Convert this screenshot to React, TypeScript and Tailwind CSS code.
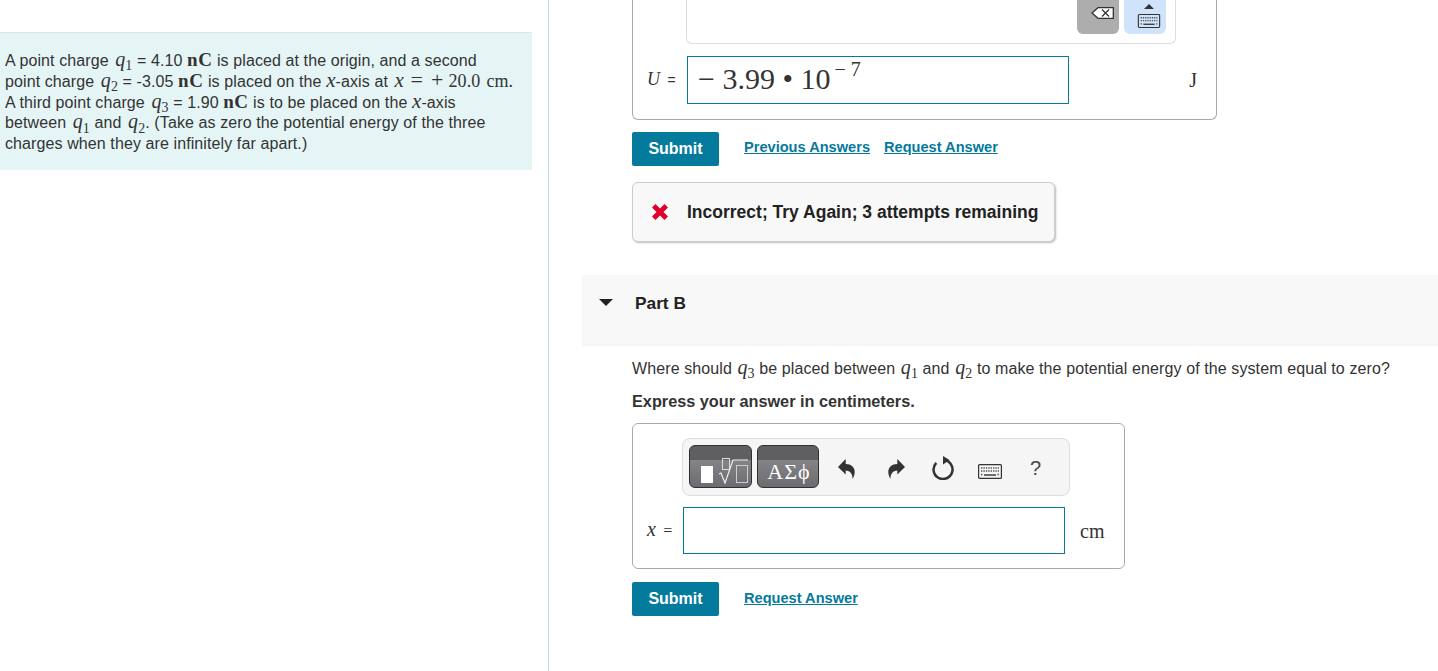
const Serif = ({ children, className = "" }: { children: React.ReactNode; className?: string }) => (
  <span className={`font-['Liberation_Serif',serif] leading-[0] ${className}`}>{children}</span>
);

const Q = ({ n, wide = false }: { n: number; wide?: boolean }) => (
  <span className={`font-['Liberation_Serif',serif] text-[20px] leading-[0] ${wide ? "ml-[2px]" : "ml-[1px]"}`}>
    <i>q</i>
    <sub className="text-[14px] leading-[0] bottom-[-0.3em]">{n}</sub>
  </span>
);

const NC = () => <Serif className="text-[19px] font-bold tracking-[0.5px]">nC</Serif>;
const X = () => <Serif className="italic text-[21px]">x</Serif>;

const SubmitButton = () => (
  <button className="w-[87px] h-[34px] rounded-[2px] bg-[#047a9c] text-white font-bold text-[16px]">
    Submit
  </button>
);

const LinkText = ({ children }: { children: React.ReactNode }) => (
  <a className="text-[14.6px] font-bold text-[#047a9c] underline">{children}</a>
);

const KeyboardIcon = ({ className = "" }: { className?: string }) => (
  <svg viewBox="0 0 24 15" className={className} fill="none">
    <rect x="0.6" y="0.6" width="22.8" height="13.8" rx="1" stroke="#333" strokeWidth="1.2" />
    <path d="M3 4h18M3 7h18" stroke="#555" strokeWidth="1.4" strokeDasharray="1.4 1" />
    <path d="M6 11h12" stroke="#333" strokeWidth="1.4" />
    <path d="M3 10.5h1.5M19.5 10.5H21" stroke="#555" strokeWidth="1.4" />
  </svg>
);

const TemplateIcon = () => (
  <svg viewBox="0 0 61 41" className="w-[61px] h-[41px]" fill="none">
    <rect x="11" y="20" width="12" height="17" fill="#fff" />
    <rect x="32.500" y="12.500" width="7" height="11" stroke="#ddd" strokeWidth="1" />
    <path d="M29 28l2-1 4 10 8-23h15" stroke="#eee" strokeWidth="1.2" />
    <rect x="46.500" y="19.500" width="11" height="17" stroke="#ccc" strokeWidth="1" />
  </svg>
);

const UndoIcon = ({ flip = false }: { flip?: boolean }) => (
  <svg viewBox="0 0 17 20" className={`w-[17px] h-[20px] ${flip ? "-scale-x-100" : ""}`}>
    <path d="M0 8L7.700 0V5C13 5 17 8.500 16.700 13.300C16.600 16 15.500 18.500 14.500 20C14.800 15 12 11.500 7.700 11.500V15.500Z" fill="#333" />
  </svg>
);

const ResetIcon = () => (
  <svg viewBox="0 0 22 24" className="w-[22px] h-[24px]" fill="none">
    <path d="M11 4A9.500 9.500 0 1 1 4.300 6.800" stroke="#333" strokeWidth="2.500" />
    <path d="M11 0l6.500 4-6.500 4.500z" fill="#333" />
  </svg>
);

const BackspaceIcon = () => (
  <svg viewBox="0 0 23 12" className="w-[23px] h-[12px]" fill="none">
    <path d="M7 .7h15.300v10.600H7L1 6z" fill="#fff" stroke="#333" strokeWidth="1.300" />
    <path d="M11 2.500l7 7M18 2.500l-7 7" stroke="#333" strokeWidth="1.300" />
  </svg>
);

const ToolButton = ({ children }: { children: React.ReactNode }) => (
  <div className="h-[43px] rounded-[6px] border border-[#2f2f2f] bg-[linear-gradient(#5f5f61_0,#5f5f61_34%,#838388_35%,#6c6c70_100%)] flex items-end justify-center overflow-hidden">
    {children}
  </div>
);

export default function App() {
  return (
    <div className="w-[1438px] h-[671px] overflow-hidden flex bg-white text-[16px] text-[#333] font-['Liberation_Sans',Arial,sans-serif]">
      <aside className="w-[549px] shrink-0 border-r border-[#bcd8ea] pt-[32px]">
        <div className="w-[532px] h-[138px] bg-[#e5f5f6] border-t border-[#dfe3e3] pt-[18px] pl-[5px] leading-[20.8px] tracking-[0.1px] whitespace-nowrap">
          A point charge <Q n={1} wide /> = 4.10 <NC /> is placed at the origin, and a second
          <br />
          point charge <Q n={2} wide /> = -3.05 <NC /> is placed on the <X />-axis at <span className="ml-[2px]" /><X />{" "}
          <Serif className="text-[22px] ml-[2px]">=</Serif>
          <Serif className="text-[22px] ml-[8px]">+</Serif>
          <Serif className="text-[18px] ml-[5px]">20.0</Serif>
          <Serif className="text-[18px] ml-[6px]">cm.</Serif>
          <br />
          A third point charge <Q n={3} wide /> = 1.90 <NC /> is to be placed on the <X />-axis
          <br />
          between <Q n={1} wide /> and <Q n={2} wide />. (Take as zero the potential energy of the three
          <br />
          charges when they are infinitely far apart.)
        </div>
      </aside>

      <main className="flex-1 pl-[33px]">
        <div className="ml-[50px] w-[585px] h-[120px] border border-t-0 border-[#aaa] rounded-b-[6px]">
          <div className="ml-[53px] w-[490px] h-[44px] border border-t-0 border-[#ddd] rounded-b-[6px] flex justify-end gap-[5px] pr-[9px]">
            <div className="w-[42px] h-[34px] bg-[#adadad] rounded-b-[6px] flex justify-center pt-[7px] pl-[8px]">
              <BackspaceIcon />
            </div>
            <div className="w-[42px] h-[34px] bg-[#cfe4fb] rounded-b-[6px] flex flex-col items-center pt-[4px] pl-[8px] gap-[5px]">
              <div className="w-0 h-0 border-x-[5px] border-x-transparent border-b-[5px] border-b-[#333]" />
              <KeyboardIcon className="w-[24px] h-[14px]" />
            </div>
          </div>
          <div className="flex items-center mt-[12px]">
            <div className="w-[54px] pl-[14px] whitespace-nowrap">
              <Serif className="italic text-[18px]">U</Serif> <span className="text-[14px] ml-[3px]">=</span>
            </div>
            <div className="w-[382px] h-[48px] border border-[#047a9c] pl-[10px] pb-[3px] flex items-center font-['Liberation_Serif',serif] text-[30px] whitespace-pre">
              − 3.99 • 10<sup className="text-[20px] top-[-0.5em] ml-[4px]">− 7</sup>
            </div>
            <div className="flex-1 text-right pr-[19px] font-['Liberation_Serif',serif] text-[20px]">J</div>
          </div>
        </div>

        <div className="ml-[50px] mt-[12px] flex items-center">
          <SubmitButton />
          <div className="ml-[25px] flex gap-[14px] pb-[2px]">
            <LinkText>Previous Answers</LinkText>
            <LinkText>Request Answer</LinkText>
          </div>
        </div>

        <div className="ml-[50px] mt-[16px] w-[423px] h-[60px] bg-[#f8f8f8] border border-[#ccc] rounded-[6px] shadow-[1px_1px_2px_#bbb] flex items-center pl-[18px] gap-[18px]">
          <svg viewBox="0 0 18 18" className="w-[18px] h-[18px]">
            <path d="M1 4.500L4.500 1 9 5.500 13.500 1 17 4.500 12.500 9 17 13.500 13.500 17 9 12.500 4.500 17 1 13.500 5.500 9z" fill="#e2002a" />
          </svg>
          <span className="font-bold text-[#222] text-[17.500px] whitespace-nowrap pt-[1px]">Incorrect; Try Again; 3 attempts remaining</span>
        </div>

        <div className="mt-[33px] h-[71px] bg-[#f8f8f8] flex pt-[16px] pl-[17px]">
          <div className="mt-[8px] w-0 h-0 border-x-[7px] border-x-transparent border-t-[7px] border-t-[#222]" />
          <span className="ml-[22px] font-bold text-[#222] text-[17.300px]">Part B</span>
        </div>

        <div className="ml-[50px]">
          <p className="mt-[12px] leading-[21px] tracking-[0.1px] whitespace-nowrap">
            Where should <Q n={3} /> be placed between <Q n={1} /> and <Q n={2} /> to make the potential energy of the system equal to zero?
          </p>
          <p className="mt-[12px] font-bold text-[16.250px] leading-[21px]">Express your answer in centimeters.</p>

          <div className="mt-[11px] w-[493px] h-[146px] border border-[#aaa] rounded-[6px] pt-[14px]">
            <div className="ml-[49px] w-[388px] h-[58px] bg-[#f5f5f5] border border-[#ddd] rounded-[8px] flex items-center pl-[6px] pb-[1px]">
              <div className="w-[63px]">
                <ToolButton>
                  <TemplateIcon />
                </ToolButton>
              </div>
              <div className="w-[62px] ml-[5px]">
                <ToolButton>
                  <span className="font-['Liberation_Serif',serif] text-white text-[22px] leading-[30px] tracking-[0.05em] pl-[2px]">ΑΣϕ</span>
                </ToolButton>
              </div>
              <div className="ml-[19px] mt-[4px]">
                <UndoIcon />
              </div>
              <div className="ml-[33px] mt-[4px]">
                <UndoIcon flip />
              </div>
              <div className="ml-[27px] mt-[3px]">
                <ResetIcon />
              </div>
              <div className="ml-[24px] mt-[10px]">
                <KeyboardIcon className="w-[24px] h-[15px]" />
              </div>
              <span className="ml-[28px] mt-[2px] text-[20px] text-[#444]">?</span>
            </div>
            <div className="flex items-center mt-[11px]">
              <div className="w-[50px] pl-[14px] whitespace-nowrap">
                <Serif className="italic text-[20px]">x</Serif> <Serif className="text-[16px] ml-[3px]">=</Serif>
              </div>
              <div className="w-[382px] h-[47px] border border-[#047a9c]" />
              <Serif className="ml-[15px] text-[20px]">cm</Serif>
            </div>
          </div>

          <div className="mt-[13px] flex items-center">
            <SubmitButton />
            <div className="ml-[25px] pb-[2px]">
              <LinkText>Request Answer</LinkText>
            </div>
          </div>
        </div>
      </main>
    </div>
  );
}
